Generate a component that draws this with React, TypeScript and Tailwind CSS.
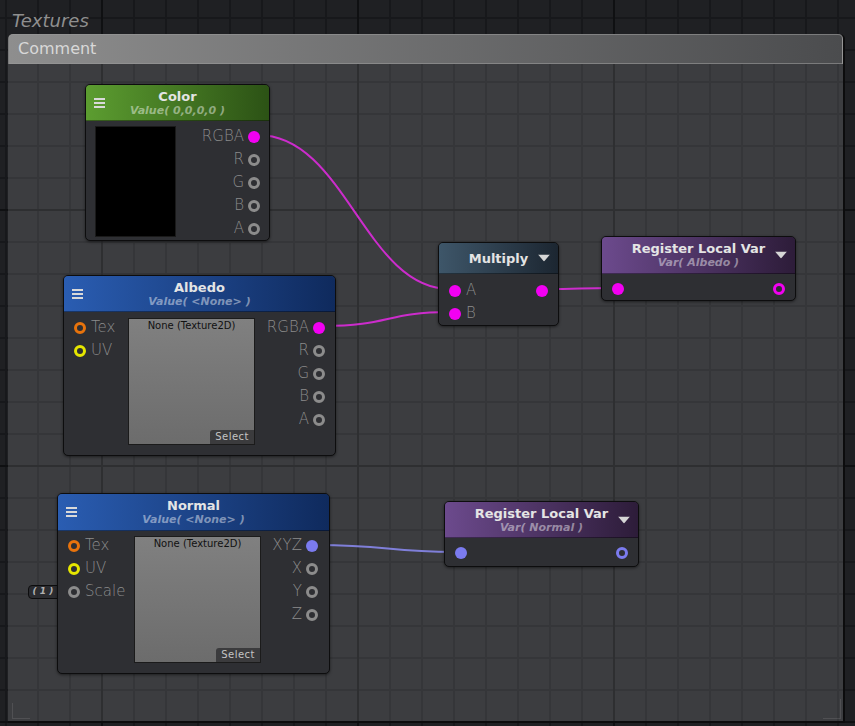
import React from "react";

const font = "font-['DejaVu_Sans',sans-serif]";

type PortKind = "grayO" | "orangeO" | "yellowO" | "pinkF" | "pinkO" | "blueF" | "blueO";

const portCls: Record<PortKind, string> = {
  grayO: "border-[3px] border-[#8c8c8c]",
  orangeO: "border-[3px] border-[#e8730c]",
  yellowO: "border-[3px] border-[#e6e600]",
  pinkF: "bg-[#f200f2]",
  pinkO: "border-[3px] border-[#f200f2]",
  blueF: "bg-[#7b7bef]",
  blueO: "border-[3px] border-[#7b7bef]",
};

function Port({ kind }: { kind: PortKind }) {
  return <span className={"block w-[12px] h-[12px] rounded-full shrink-0 " + portCls[kind]} />;
}

function Hamburger() {
  return (
    <div className="absolute left-[8px] top-1/2 -translate-y-1/2 flex flex-col gap-[2px]">
      <span className="block w-[11px] h-[2px] bg-[#d9d9d9]" />
      <span className="block w-[11px] h-[2px] bg-[#d9d9d9]" />
      <span className="block w-[11px] h-[2px] bg-[#d9d9d9]" />
    </div>
  );
}

function Caret({ right }: { right: string }) {
  return (
    <svg className={"absolute top-1/2 -translate-y-1/2 " + right} width="12" height="7" viewBox="0 0 12 7">
      <path d="M0 0 H12 L6 7 Z" fill="#d6d6d6" />
    </svg>
  );
}

function Header({
  title,
  sub,
  grad,
  h,
  menu,
  caret,
}: {
  title: string;
  sub?: string;
  grad: string;
  h: string;
  menu?: boolean;
  caret?: string;
}) {
  return (
    <div className={"relative flex flex-col items-center justify-center rounded-t-[4px] border-b border-black/40 " + grad + " " + h}>
      {menu && <Hamburger />}
      {caret && <Caret right={caret} />}
      <div className="text-[13px] font-bold leading-[15px] text-[#e4e4e4]">{title}</div>
      {sub && <div className="text-[11px] font-bold italic leading-[13px] text-white/45">{sub}</div>}
    </div>
  );
}

function OutRow({ label, kind }: { label?: string; kind: PortKind }) {
  return (
    <div className="h-[23px] flex items-center justify-end gap-[4px]">
      {label && <span className="text-[15px] font-[200] text-[#8c8c8c] leading-none">{label}</span>}
      <Port kind={kind} />
    </div>
  );
}

function InRow({ label, kind }: { label?: string; kind: PortKind }) {
  return (
    <div className="h-[23px] flex items-center gap-[5px]">
      <Port kind={kind} />
      {label && <span className="text-[15px] font-[200] text-[#8c8c8c] leading-none">{label}</span>}
    </div>
  );
}

function TexPreview() {
  return (
    <div className="relative mt-[2px] w-[127px] h-[127px] border border-[#1b1b1b] bg-[linear-gradient(to_bottom,#808080,#6c6c6c)]">
      <div className="pt-[1px] text-center text-[10px] leading-[12px] text-[#111]">None (Texture2D)</div>
      <div className="absolute right-0 bottom-0 h-[14px] px-[5px] rounded-tl-[3px] bg-[#3b3b3d] text-[10px] leading-[14px] tracking-[0.5px] text-[#c4c4c4]">
        Select
      </div>
    </div>
  );
}

const nodeBox = "absolute rounded-[5px] border border-[#0d0d0e] bg-[#2e2f33] shadow-[0_1px_3px_rgba(0,0,0,0.5)] flex flex-col";

export default function App() {
  return (
    <div
      className={
        "relative w-[855px] h-[726px] overflow-hidden bg-[#1f2023] " +
        font +
        " bg-[linear-gradient(to_bottom,#0f1012_2px,transparent_2px),linear-gradient(to_right,#0f1012_2px,transparent_2px),linear-gradient(to_bottom,#17181b_2px,transparent_2px),linear-gradient(to_right,#17181b_2px,transparent_2px)]" +
        " bg-[size:256px_256px,256px_256px,32px_32px,32px_32px]" +
        " bg-[position:0_209px,357px_0,0_17px,5px_0]"
      }
    >
      {/* group title */}
      <div className="absolute left-[12px] top-[10px] text-[18px] italic leading-[22px] text-[#8f8f8f]">Textures</div>

      {/* comment frame */}
      <div className="absolute left-[8px] top-[34px] w-[837px] h-[689px] rounded-t-[5px] bg-white/[0.13] border-r-2 border-b-2 border-[#0c0c0d] flex flex-col">
        <div className="h-[30px] rounded-t-[5px] border border-[#9a9a9a]/60 bg-[linear-gradient(to_right,#8e8e8e,#4b4c4e)] px-[9px] flex items-center text-[16px] text-[#d8d8d8]">
          Comment
        </div>
        <div className="flex-1 relative">
          <div className="absolute left-[4px] bottom-[2px] w-[18px] h-[16px] border-l border-b border-white/10" />
          <div className="absolute right-[2px] bottom-[2px] w-[18px] h-[20px] border-r border-b border-white/10" />
        </div>
      </div>

      {/* wires */}
      <svg className="absolute left-0 top-0" width="855" height="726" viewBox="0 0 855 726">
        <g fill="none" strokeWidth="2" strokeLinecap="round">
          <path d="M258 135 C 345 135, 365 289, 450 289" stroke="#cc2ccc" />
          <path d="M323 326 C 390 326, 385 312, 450 312" stroke="#cc2ccc" />
          <path d="M546 289 C 580 289, 580 288, 613 288" stroke="#cc2ccc" />
          <path d="M316 545 C 390 545, 385 552, 456 552" stroke="#7f7fd9" />
        </g>
      </svg>

      {/* Color node */}
      <div className={nodeBox + " left-[85px] top-[84px] w-[185px] h-[157px]"}>
        <Header title="Color" sub="Value( 0,0,0,0 )" grad="bg-[linear-gradient(to_right,#5c9d30,#2c5215)]" h="h-[36px]" menu />
        <div className="flex pt-[4px] pr-[9px]">
          <div className="ml-[9px] mt-[1px] w-[81px] h-[111px] bg-black border border-[#1a1a1a]" />
          <div className="flex-1 flex flex-col">
            <OutRow label="RGBA" kind="pinkF" />
            <OutRow label="R" kind="grayO" />
            <OutRow label="G" kind="grayO" />
            <OutRow label="B" kind="grayO" />
            <OutRow label="A" kind="grayO" />
          </div>
        </div>
      </div>

      {/* Albedo node */}
      <div className={nodeBox + " left-[63px] top-[275px] w-[273px] h-[181px]"}>
        <Header title="Albedo" sub="Value( <None> )" grad="bg-[linear-gradient(to_right,#2a5db2,#0f2a5d)]" h="h-[36px]" menu />
        <div className="flex pt-[4px] pl-[10px] pr-[10px]">
          <div className="w-[54px] flex flex-col">
            <InRow label="Tex" kind="orangeO" />
            <InRow label="UV" kind="yellowO" />
          </div>
          <TexPreview />
          <div className="flex-1 flex flex-col">
            <OutRow label="RGBA" kind="pinkF" />
            <OutRow label="R" kind="grayO" />
            <OutRow label="G" kind="grayO" />
            <OutRow label="B" kind="grayO" />
            <OutRow label="A" kind="grayO" />
          </div>
        </div>
      </div>

      {/* Multiply node */}
      <div className={nodeBox + " left-[438px] top-[242px] w-[121px] h-[84px]"}>
        <Header title="Multiply" grad="bg-[linear-gradient(to_right,#3e5669,#1c2631)]" h="h-[31px]" caret="right-[8px]" />
        <div className="flex pt-[5px] px-[10px]">
          <div className="flex flex-col">
            <InRow label="A" kind="pinkF" />
            <InRow label="B" kind="pinkF" />
          </div>
          <div className="flex-1 flex flex-col">
            <OutRow kind="pinkF" />
          </div>
        </div>
      </div>

      {/* Register Local Var (Albedo) */}
      <div className={nodeBox + " left-[601px] top-[236px] w-[195px] h-[65px]"}>
        <Header title="Register Local Var" sub="Var( Albedo )" grad="bg-[linear-gradient(to_right,#6c4a8d,#2d1c39)]" h="h-[37px]" caret="right-[8px]" />
        <div className="flex pt-[3px] px-[10px]">
          <InRow kind="pinkF" />
          <div className="flex-1 flex flex-col">
            <OutRow kind="pinkO" />
          </div>
        </div>
      </div>

      {/* (1) scale tag */}
      <div className="absolute left-[28px] top-[585px] w-[30px] h-[14px] rounded-l-[4px] border border-[#0d0d0e] bg-[#2b2c30] flex items-center justify-center text-[9px] font-bold italic text-[#b0b0b0]">
        ( 1 )
      </div>

      {/* Normal node */}
      <div className={nodeBox + " left-[57px] top-[493px] w-[273px] h-[181px]"}>
        <Header title="Normal" sub="Value( <None> )" grad="bg-[linear-gradient(to_right,#2a5db2,#0f2a5d)]" h="h-[37px]" menu />
        <div className="flex pt-[3px] pl-[10px] pr-[11px]">
          <div className="w-[66px] flex flex-col">
            <InRow label="Tex" kind="orangeO" />
            <InRow label="UV" kind="yellowO" />
            <InRow label="Scale" kind="grayO" />
          </div>
          <TexPreview />
          <div className="flex-1 flex flex-col">
            <OutRow label="XYZ" kind="blueF" />
            <OutRow label="X" kind="grayO" />
            <OutRow label="Y" kind="grayO" />
            <OutRow label="Z" kind="grayO" />
          </div>
        </div>
      </div>

      {/* Register Local Var (Normal) */}
      <div className={nodeBox + " left-[444px] top-[501px] w-[195px] h-[66px]"}>
        <Header title="Register Local Var" sub="Var( Normal )" grad="bg-[linear-gradient(to_right,#6c4a8d,#2d1c39)]" h="h-[36px]" caret="right-[8px]" />
        <div className="flex pt-[3px] px-[10px]">
          <InRow kind="blueF" />
          <div className="flex-1 flex flex-col">
            <OutRow kind="blueO" />
          </div>
        </div>
      </div>
    </div>
  );
}
